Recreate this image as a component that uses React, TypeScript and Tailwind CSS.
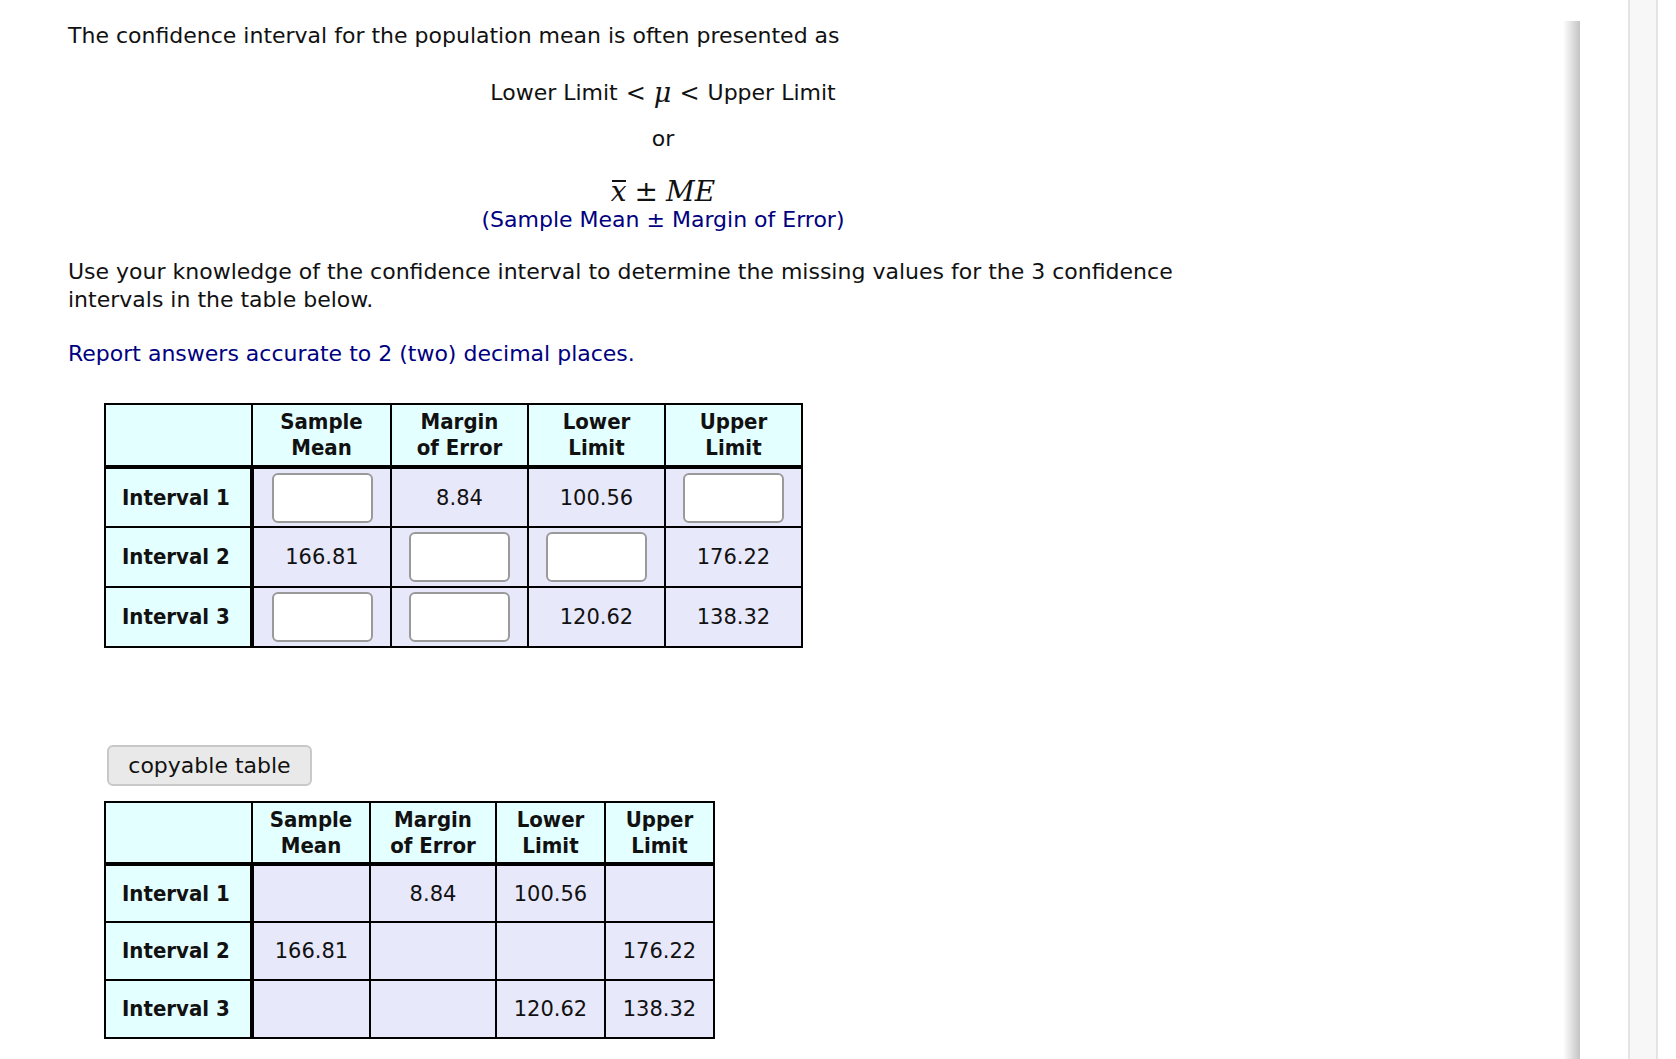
import React from 'react';

const font = { fontFamily: '"DejaVu Sans", sans-serif' };
const serif = { fontFamily: '"DejaVu Serif", "Liberation Serif", serif' };
const narrow = { fontFamily: '"DejaVu Sans Condensed", "DejaVu Sans", sans-serif' };

type Cell = string | null;

const rows: { label: string; cells: Cell[] }[] = [
  { label: 'Interval 1', cells: [null, '8.84', '100.56', null] },
  { label: 'Interval 2', cells: ['166.81', null, null, '176.22'] },
  { label: 'Interval 3', cells: [null, null, '120.62', '138.32'] },
];

const heads = [
  ['Sample', 'Mean'],
  ['Margin', 'of Error'],
  ['Lower', 'Limit'],
  ['Upper', 'Limit'],
];

interface TableProps {
  widths: string[];
  inputs: boolean;
  headH: string;
  rowH: string;
}

const IntervalTable: React.FC<TableProps> = ({ widths, inputs, headH, rowH }) => {
  return (
    <table className="border-collapse border-2 border-black text-[22px] leading-[26px] text-[#111]">
      <thead>
        <tr className={headH}>
          <th className={`${widths[0]} bg-[#e4ffff] border-2 border-black border-b-4`}></th>
          {heads.map((h, i) => (
            <th key={i} style={narrow} className={`${widths[i + 1]} bg-[#e4ffff] border-2 border-black border-b-4 font-bold text-center`}>
              {h[0]}
              <br />
              {h[1]}
            </th>
          ))}
        </tr>
      </thead>
      <tbody>
        {rows.map((r) => (
          <tr key={r.label} className={rowH}>
            <td style={narrow} className="bg-[#e4ffff] border-2 border-black border-r-4 pl-[16px] text-left font-bold">{r.label}</td>
            {r.cells.map((c, i) => (
              <td key={i} className="bg-[#e8e8fb] border-2 border-black text-center text-[21px]">
                {c !== null ? (
                  c
                ) : inputs ? (
                  <div className="mx-auto w-[101px] h-[50px] rounded-[6px] border-2 border-[#9a9a9a] bg-white"></div>
                ) : null}
              </td>
            ))}
          </tr>
        ))}
      </tbody>
    </table>
  );
};

const App: React.FC = () => {
  return (
    <div className="flex h-screen bg-white overflow-hidden" style={font}>
      <div className="w-[1563px] shrink-0 pl-[68px] pt-[22px]">
        <div className="w-[1190px] text-[22px] leading-[28px] text-[#111]">
          <p>The confidence interval for the population mean is often presented as</p>

          <div className="mt-[29px] flex justify-center items-center h-[28px]">
            <span>Lower Limit</span>
            <span className="mx-[8px] text-[24px]" style={serif}>&lt;</span>
            <span className="italic text-[27px]" style={serif}>μ</span>
            <span className="mx-[8px] text-[24px]" style={serif}>&lt;</span>
            <span>Upper Limit</span>
          </div>

          <p className="mt-[18px] text-center">or</p>

          <div className="mt-[25px] flex justify-center items-center h-[28px] text-[28px]" style={serif}>
            <span className="italic relative">
              <span className="absolute left-[1px] right-[1px] top-[2px] h-[2px] bg-[#111]"></span>
              x
            </span>
            <span className="mx-[8px]">±</span>
            <span className="italic">ME</span>
          </div>

          <p className="text-center text-[#000080]">(Sample Mean ± Margin of Error)</p>

          <p className="mt-[24px]">
            Use your knowledge of the confidence interval to determine the missing values for the 3 confidence intervals in the table below.
          </p>

          <p className="mt-[26px] text-[#000080]">Report answers accurate to 2 (two) decimal places.</p>

          <div className="mt-[35px] ml-[36px]">
            <IntervalTable
              widths={['w-[147px]', 'w-[139px]', 'w-[137px]', 'w-[137px]', 'w-[137px]']}
              inputs={true}
              headH="h-[63px]"
              rowH="h-[60px]"
            />
          </div>

          <button className="mt-[97px] ml-[39px] h-[41px] w-[205px] rounded-[6px] border-2 border-[#c8c8c8] bg-[#e9e9e9] text-[22px] text-[#111]">
            copyable table
          </button>

          <div className="mt-[15px] ml-[36px]">
            <IntervalTable
              widths={['w-[147px]', 'w-[118px]', 'w-[126px]', 'w-[109px]', 'w-[109px]']}
              inputs={false}
              headH="h-[62px]"
              rowH="h-[58px]"
            />
          </div>
        </div>
      </div>

      <div className="w-[17px] shrink-0 mt-[21px] bg-gradient-to-r from-white to-[#c4c4c4]"></div>

      <div className="ml-[48px] w-[30px] shrink-0 bg-[#f7f7f7] border-x-2 border-[#e4e4e4]"></div>
    </div>
  );
};

export default App;
